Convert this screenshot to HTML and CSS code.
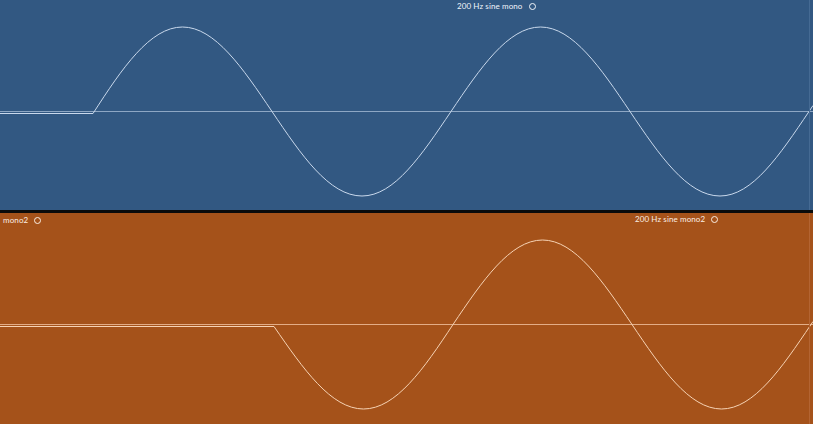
FILE: index.html
```html
<!DOCTYPE html>
<html>
<head>
<meta charset="utf-8">
<link rel="stylesheet" href="styles.css">
</head>
<body>
<div class="stack">
  <div class="pane pane-blue">
    <svg class="wave" width="813" height="210" viewBox="0 0 813 210">
      <line x1="0" y1="111.5" x2="813" y2="111.5" class="center"/>
      <path class="sig" d="M0,113.5 L93,113.5 C122.19,68.21 150.11,27 182.5,27 C214.89,27 242.81,68.21 272,111.5 C301.19,154.79 329.11,196 362,196 C394.39,196 421.81,154.79 451,111.5 C480.19,68.21 508.11,27 540.5,27 C572.89,27 600.81,68.21 630,111.5 C659.19,154.79 687.11,196 720,196 C752.39,196 779.81,154.79 809,111.5 L813,105.5"/>
      <line x1="809.5" y1="0" x2="809.5" y2="210" class="edge"/>
    </svg>
    <div class="label label-top"><span>200 Hz sine mono</span><i class="ring"></i></div>
  </div>
  <div class="divider"></div>
  <div class="pane pane-orange">
    <svg class="wave" width="813" height="211" viewBox="0 0 813 211">
      <line x1="0" y1="111.5" x2="813" y2="111.5" class="center"/>
      <path class="sig" d="M0,113.5 L274,113.5 C303.19,155.79 331.11,196 363.5,196 C395.89,196 423.81,155.79 453,111.5 C482.19,68.21 510.11,27 542.5,27 C574.89,27 602.81,68.21 632,111.5 C661.19,154.79 689.11,196 721.5,196 C753.89,196 781.81,154.79 811,111.5 L813,108.5"/>
      <line x1="809.5" y1="0" x2="809.5" y2="211" class="edge"/>
    </svg>
    <div class="label label-left"><span>mono2</span><i class="ring"></i></div>
    <div class="label label-right"><span>200 Hz sine mono2</span><i class="ring"></i></div>
  </div>
</div>
</body>
</html>
```
FILE: styles.css
```css
html, body {
  margin: 0;
  padding: 0;
  background: #0b0b0b;
}
body {
  width: 813px;
  height: 424px;
  overflow: hidden;
  font-family: Lato, "Open Sans", sans-serif;
}
.stack {
  display: flex;
  flex-direction: column;
  width: 813px;
}
.pane {
  position: relative;
  width: 813px;
}
.pane-blue {
  height: 210px;
  background: #325882;
  color: #f0f4fa;
}
.pane-orange {
  height: 211px;
  background: #a5521a;
  color: #fbeee4;
}
.divider {
  height: 3px;
  background: #0b0b0b;
}
.wave {
  display: block;
}
.pane-blue .center { stroke: #8ea7c4; stroke-width: 1; }
.pane-blue .sig { stroke: #c9d8ec; stroke-width: 1; fill: none; }
.pane-blue .edge { stroke: #456a93; stroke-width: 1; }
.pane-orange .center { stroke: #e3ad87; stroke-width: 1; }
.pane-orange .sig { stroke: #f6d2b4; stroke-width: 1; fill: none; }
.pane-orange .edge { stroke: #b36432; stroke-width: 1; }
.label {
  position: absolute;
  display: flex;
  align-items: center;
  gap: 6px;
  font-size: 8px;
  font-weight: 400;
  line-height: 10px;
  letter-spacing: 0.1px;
  white-space: nowrap;
}
.label-top { left: 457px; top: 1px; }
.label-left { left: 3px; top: 2px; }
.label-right { left: 635px; top: 1px; }
.ring {
  display: block;
  width: 5px;
  height: 5px;
  border: 1px solid currentColor;
  border-radius: 50%;
}
```
